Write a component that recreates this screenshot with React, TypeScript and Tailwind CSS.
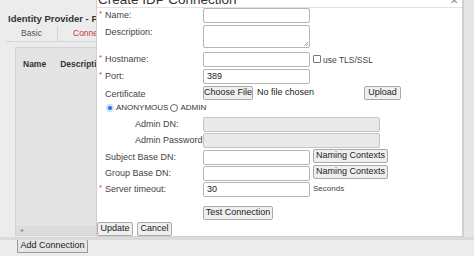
import React from "react";

const font = { fontFamily: "'Liberation Sans', Arial, sans-serif" };

const Star = () => <span className="inline-block shrink-0 w-[6px] h-[8px] text-[8px] text-[#d33] leading-[8px]">*</span>;

const Btn = ({ children, className = "" }: { children: React.ReactNode; className?: string }) => (
  <div
    className={`h-[14px] flex items-center justify-center whitespace-nowrap border border-[#a9a9a9] rounded-[2px] bg-[#efefef] text-[9px] text-[#222] ${className}`}
  >
    {children}
  </div>
);

const Input = ({ value = "", className = "w-[107px]", disabled = false }: { value?: string; className?: string; disabled?: boolean }) => (
  <div
    className={`h-[15px] flex items-center px-[3px] border rounded-[2px] text-[9px] text-[#222] ${
      disabled ? "bg-[#e9e9e9] border-[#c4c4c4]" : "bg-white border-[#b5b5b5]"
    } ${className}`}
  >
    {value}
  </div>
);

const Label = ({ text, star = false, indent = false }: { text: string; star?: boolean; indent?: boolean }) => (
  <div className={`w-[106px] shrink-0 flex items-start whitespace-nowrap pt-[2px] text-[9px] text-[#444] leading-[10px] ${indent ? "pl-[32px]" : "pl-[2px]"}`}>
    {star ? <Star /> : <span className="inline-block shrink-0 w-[6px]" />}
    <span>{text}</span>
  </div>
);

export default function App() {
  return (
    <div className="relative w-[474px] h-[256px] overflow-hidden bg-[#ececec]" style={font}>
      {/* page behind */}
      <div className="flex flex-col h-full">
        <div className="pt-[12px] pl-[8px] text-[9.5px] font-bold text-[#333] h-[26px] whitespace-nowrap">Identity Provider - Properties</div>
        <div className="flex h-[16px] border-b border-[#d6d6d6] ml-[6px] mr-[11px]">
          <div className="w-[52px] flex items-center justify-center text-[8.5px] text-[#555] border-r border-[#d6d6d6]">Basic</div>
          <div className="w-[70px] flex items-center pl-[15px] text-[8.5px] text-[#c0393b]">Connections</div>
        </div>
        <div className="ml-[15px] mr-[11px] mt-[5px] h-[189px] border border-[#d3d3d3] bg-[#e4e4e4] flex flex-col">
          <div className="flex gap-[14px] pt-[10px] pl-[7px] text-[8.5px] font-bold text-[#333]">
            <span>Name</span>
            <span>Description</span>
          </div>
          <div className="mt-auto h-[9px] bg-[#dcdcdc] flex items-center pl-[4px] text-[6px] text-[#888]">◂</div>
        </div>
        <div className="ml-[17px] mt-[3px] w-[71px] h-[14px] flex items-center justify-center whitespace-nowrap border border-[#999] bg-[#e6e6e6] text-[9px] text-[#222]">
          Add Connection
        </div>
      </div>

      {/* right strip */}
      <div className="absolute right-0 top-0 w-[11px] h-[237px] border-l border-[#cfcfcf] bg-[#e6e6e6]" />
      <div className="absolute left-0 top-[237px] w-full h-[3px] bg-[#dadada]" />

      {/* dialog */}
      <div className="absolute left-[96px] top-[-8px] w-[367px] h-[245px] bg-white border border-[#d0d0d0] flex flex-col">
        <div className="h-[16px] border-b border-[#e2e2e2] flex items-end justify-between pl-[1px] pr-[4px] overflow-hidden">
          <span className="text-[13.5px] text-[#333] leading-[15px] whitespace-nowrap">Create IDP Connection</span>
          <span className="text-[10px] text-[#888] leading-[12px]">✕</span>
        </div>

        <div className="flex flex-col">
          <div className="flex mt-[0px] h-[15px]">
            <Label text="Name:" star />
            <Input />
          </div>
          <div className="flex mt-[2px] h-[23px]">
            <Label text="Description:" />
            <div className="relative w-[107px] h-[23px] border border-[#b5b5b5] rounded-[2px] bg-white">
              <svg className="absolute right-[1px] bottom-[1px]" width="5" height="5" viewBox="0 0 5 5">
                <path d="M5 1 L1 5 M5 3 L3 5" stroke="#999" strokeWidth="0.8" />
              </svg>
            </div>
          </div>
          <div className="flex mt-[4px] h-[15px] items-start">
            <Label text="Hostname:" star />
            <Input />
            <div className="ml-[3px] mt-[3px] w-[8px] h-[8px] border border-[#777] rounded-[1px] bg-white" />
            <span className="ml-[2px] mt-[3px] text-[8.5px] text-[#444] leading-[10px] whitespace-nowrap">use TLS/SSL</span>
          </div>
          <div className="flex mt-[2px] h-[15px]">
            <Label text="Port:" star />
            <Input value="389" />
          </div>
          <div className="flex mt-[2px] h-[14px] items-center">
            <Label text="Certificate" />
            <Btn className="w-[50px]">Choose File</Btn>
            <span className="ml-[4px] text-[9px] text-[#222] whitespace-nowrap">No file chosen</span>
            <Btn className="ml-[50px] w-[37px]">Upload</Btn>
          </div>
          <div className="flex mt-[2px] h-[12px] items-center pl-[9px] text-[8px] text-[#333] whitespace-nowrap">
            <span className="w-[8px] h-[8px] rounded-full bg-[#1a73e8] border-[2px] border-[#cfe0fb] box-border mr-[2px]" />
            <span>ANONYMOUS</span>
            <span className="ml-[2px] w-[8px] h-[8px] rounded-full border border-[#666] mr-[2px]" />
            <span>ADMIN</span>
          </div>
          <div className="flex mt-[3px] h-[15px]">
            <Label text="Admin DN:" indent />
            <Input disabled className="w-[177px]" />
          </div>
          <div className="flex mt-[1px] h-[15px]">
            <Label text="Admin Password:" indent />
            <Input disabled className="w-[177px]" />
          </div>
          <div className="flex mt-[2px] h-[15px] items-start">
            <Label text="Subject Base DN:" />
            <Input />
            <Btn className="ml-[3px] w-[75px] -mt-[1px]">Naming Contexts</Btn>
          </div>
          <div className="flex mt-[1px] h-[15px] items-start">
            <Label text="Group Base DN:" />
            <Input />
            <Btn className="ml-[3px] w-[75px] -mt-[1px]">Naming Contexts</Btn>
          </div>
          <div className="flex mt-[1px] h-[15px] items-start">
            <Label text="Server timeout:" star />
            <Input value="30" />
            <span className="ml-[3px] mt-[2px] text-[8px] text-[#444] leading-[10px]">Seconds</span>
          </div>
          <div className="flex mt-[9px] h-[14px]">
            <div className="w-[106px]" />
            <Btn className="w-[70px]">Test Connection</Btn>
          </div>
          <div className="flex mt-[2px] gap-[4px]">
            <Btn className="w-[36px]">Update</Btn>
            <Btn className="w-[35px]">Cancel</Btn>
          </div>
        </div>
      </div>
    </div>
  );
}
